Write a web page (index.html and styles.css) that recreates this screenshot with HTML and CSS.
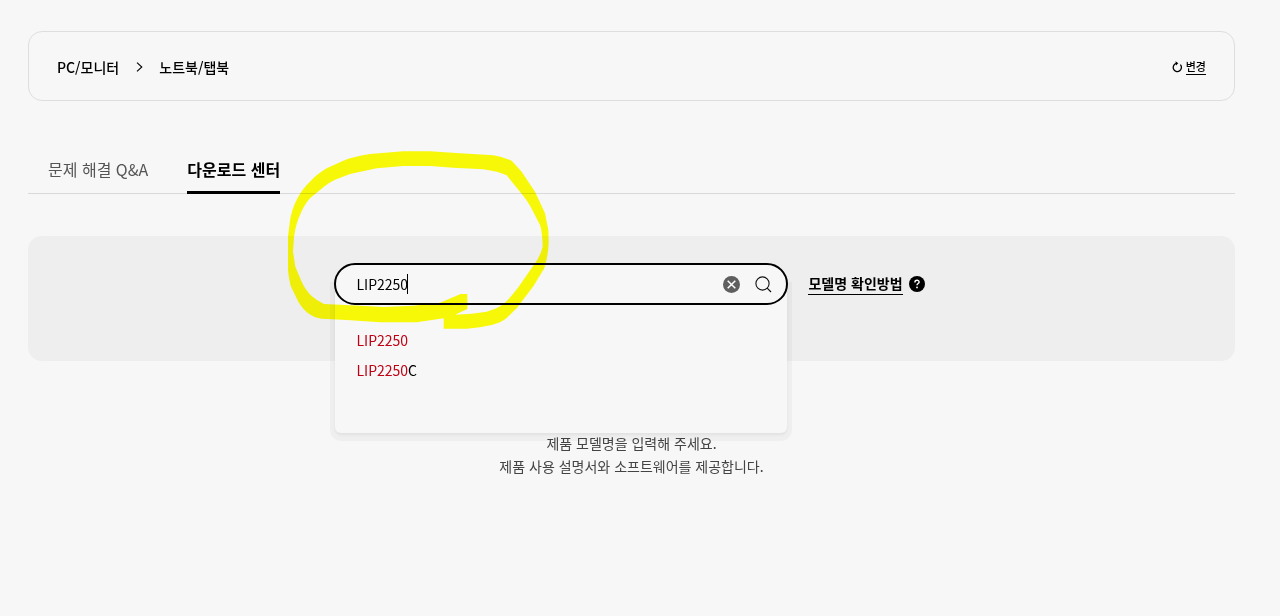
FILE: index.html
```html
<!DOCTYPE html>
<html lang="ko">
<head>
<meta charset="utf-8">
<meta name="viewport" content="width=device-width, initial-scale=1">
<title>다운로드 센터</title>
<link rel="stylesheet" href="styles.css">
</head>
<body>
<main class="page">
  <nav class="category" aria-label="제품 분류">
    <ol class="path">
      <li>PC/모니터</li>
      <li class="path-arrow" aria-hidden="true"><svg width="8" height="10" viewBox="0 0 8 10"><path d="M1 .6 5.8 5 1 9.4" fill="none" stroke="#000" stroke-width="1.1"/></svg></li>
      <li>노트북/탭북</li>
    </ol>
    <button class="change" type="button">
      <svg width="10" height="12" viewBox="0 0 10 12" aria-hidden="true"><path d="M8.3 3.6A4.1 4.1 0 1 1 4.6 2.4" fill="none" stroke="#000" stroke-width="1.3"/><path d="M3.5 .2 6.3 2.3 4 4.6" fill="#000"/></svg>
      <span class="change-label">변경</span>
    </button>
  </nav>

  <nav class="tabs" aria-label="고객지원">
    <a class="tab" href="#qna">문제 해결 Q&amp;A</a>
    <a class="tab tab-active" href="#download" aria-current="page">다운로드 센터</a>
  </nav>

  <section class="panel">
    <form class="search">
      <div class="results">
        <ul class="result-list">
          <li><a href="#LIP2250"><mark>LIP2250</mark></a></li>
          <li><a href="#LIP2250C"><mark>LIP2250</mark>C</a></li>
        </ul>
      </div>
      <div class="field">
        <div class="entry">
          <input class="model" type="text" value="LIP2250" aria-label="제품 모델명">
          <span class="caret"></span>
        </div>
        <button class="icon-button" type="button" aria-label="지우기">
          <svg width="17" height="17" viewBox="0 0 17 17"><circle cx="8.5" cy="8.5" r="8.5" fill="#5f5f5f"/><path d="m4.7 4.7 7.6 7.6m0-7.6-7.6 7.6" stroke="#fff" stroke-width="1.5"/></svg>
        </button>
        <button class="icon-button" type="submit" aria-label="검색">
          <svg width="17" height="17" viewBox="0 0 17 17"><circle cx="7.5" cy="7.5" r="6.6" fill="none" stroke="#111" stroke-width="1.1"/><path d="m12.2 12.2 3.8 3.8" stroke="#111" stroke-width="1.2"/></svg>
        </button>
      </div>
      <svg class="marker" width="290" height="200" viewBox="0 0 870 600" aria-hidden="true">
        <path fill="#ffff08" fill-rule="evenodd" d="M491 566H560L600 562 635 555Q665 547 680 534L710 505 760 439 793 385Q804 350 806 310L805 270 795 220 765 155 725 95 695 62Q665 50 640 46L540 40 450 34H370L270 42Q215 51 190 62L140 85Q110 103 90 125 68 145 54 172 33 210 29 250L24 290V390Q27 420 33 440L55 485Q70 510 88 522 105 534 125 536L200 540 300 547H410L491 535ZM562 462H542L480 488 400 497 310 501 240 497 132 492Q108 480 95 468 75 448 65 425L46 380 39 335 42 290Q48 250 60 225 72 195 90 175L130 142Q145 128 165 119L210 102 290 85 370 78H450L520 83 610 88Q655 94 680 106L720 155Q745 185 757 210L780 255Q787 275 788 320 780 350 765 370L715 442Q690 475 670 493 650 507 620 515L575 521 525 524 562 507Z"/>
      </svg>
    </form>
    <a class="help" href="#model-help">
      <span class="help-label">모델명 확인방법</span>
      <svg width="16" height="16" viewBox="0 0 16 16" aria-hidden="true"><circle cx="8" cy="8" r="8" fill="#000"/><path d="M5.9 6.4C5.9 3.6 10.2 3.7 10.1 6.1 10 7.6 8 7.5 8 9.3" fill="none" stroke="#fff" stroke-width="1.4"/><circle cx="8" cy="11.4" r=".9" fill="#fff"/></svg>
    </a>
  </section>

  <p class="guide">제품 모델명을 입력해 주세요.<br>제품 사용 설명서와 소프트웨어를 제공합니다.</p>
</main>
</body>
</html>
```
FILE: styles.css
```css
* {
  box-sizing: border-box;
}

body {
  margin: 0;
  background: #f7f7f7;
  color: #000;
  font: 14px/20px "Noto Sans CJK KR", "Noto Sans", sans-serif;
}

button {
  padding: 0;
  border: 0;
  background: none;
  color: inherit;
  font: inherit;
  cursor: pointer;
}

a {
  color: inherit;
  text-decoration: none;
}

.page {
  padding: 31px 45px 32px 28px;
}

.category {
  display: flex;
  align-items: center;
  justify-content: space-between;
  padding: 25px 28px 23px;
  border: 1px solid #dedede;
  border-radius: 14px;
}

.path {
  display: flex;
  align-items: center;
  gap: 15px;
  margin: 0;
  padding: 0;
  list-style: none;
  font-weight: 500;
}

.path-arrow {
  display: flex;
  padding-left: 2px;
}

.change {
  display: flex;
  align-items: center;
  gap: 4px;
  font-size: 11px;
  font-weight: 500;
  line-height: 15px;
}

.change-label {
  border-bottom: 1px solid #000;
}

.tabs {
  display: flex;
  gap: 19px;
  margin-top: 52px;
  border-bottom: 1px solid #d9d9d9;
  font-size: 16px;
  line-height: 24px;
}

.tab {
  margin-bottom: -1px;
  padding: 4px 20px 10px;
  border-bottom: 3px solid transparent;
  color: #555;
}

.tab-active {
  padding-right: 0;
  padding-left: 0;
  border-color: #000;
  color: #000;
  font-weight: 700;
}

.panel {
  display: flex;
  align-items: flex-start;
  justify-content: center;
  gap: 20px;
  min-height: 125px;
  margin-top: 42px;
  padding: 27px 24px 27px 20px;
  border-radius: 14px;
  background: #eee;
}

.search {
  position: relative;
  flex: 0 1 454px;
  margin: 0;
}

.field {
  position: relative;
  display: flex;
  align-items: center;
  gap: 15px;
  height: 42px;
  padding: 0 14px 0 20px;
  border: 2px solid #000;
  border-radius: 21px;
  background: #f7f7f7;
}

.entry {
  position: relative;
  flex: 1;
  min-width: 0;
}

.model {
  display: block;
  width: 100%;
  padding: 0;
  border: 0;
  outline: 0;
  background: none;
  color: #000;
  font: inherit;
}

.caret {
  position: absolute;
  top: 0;
  left: 51px;
  width: 1px;
  height: 20px;
  background: #000;
}

.icon-button {
  display: flex;
}

.results {
  position: absolute;
  top: 21px;
  right: 1px;
  left: 1px;
  min-height: 149px;
  padding: 41px 21px 20px;
  border-radius: 0 0 6px 6px;
  background: #f7f7f7;
  box-shadow: 0 2px 3px rgba(0, 0, 0, 0.06), 0 3px 0 5px rgba(0, 0, 0, 0.03);
}

.result-list {
  margin: 0;
  padding: 0;
  list-style: none;
  line-height: 30px;
}

.result-list mark {
  background: none;
  color: #c00014;
}

.marker {
  position: absolute;
  top: -123px;
  left: -54px;
  mix-blend-mode: multiply;
  pointer-events: none;
}

.help {
  display: flex;
  align-items: center;
  gap: 6px;
  padding-top: 10px;
  font-weight: 700;
  line-height: 21px;
}

.help-label {
  border-bottom: 1px solid #000;
}

.guide {
  margin: 71px 0 0;
  color: #444;
  line-height: 23px;
  text-align: center;
}
```
